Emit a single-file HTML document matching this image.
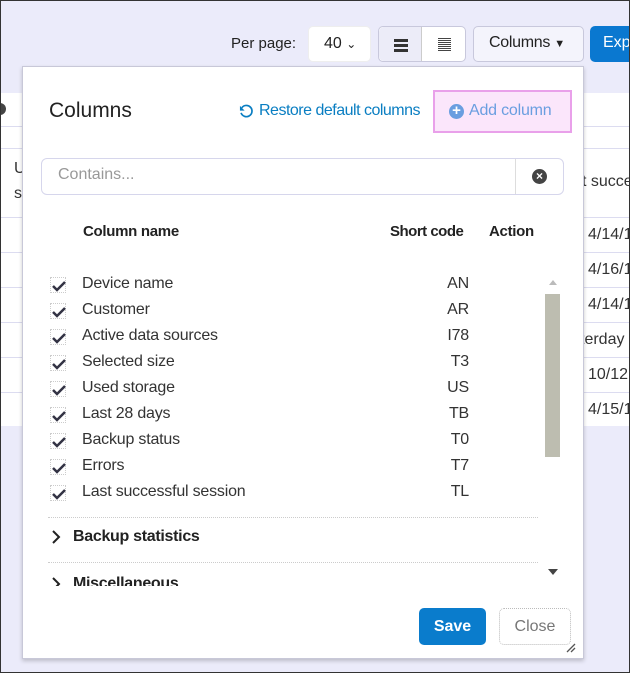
<!DOCTYPE html>
<html><head><meta charset="utf-8"><style>
*{box-sizing:border-box;margin:0;padding:0}
body{width:630px;height:673px;overflow:hidden;background:#ebebfa;font-family:"Liberation Sans",sans-serif;position:relative;}
.frame{position:absolute;left:0;top:0;width:630px;height:673px;border:1px solid #333;pointer-events:none;z-index:9}
.abs{position:absolute;white-space:nowrap}
.tbl{position:absolute;left:0;top:93px;width:630px;height:333px;background:#fff}
.hl{position:absolute;height:1px;background:#dcdcf0;left:0;width:630px}
.date{position:absolute;left:588px;font-size:16px;color:#333;white-space:nowrap}
.dlg{position:absolute;left:22px;top:66px;width:562px;height:593px;background:#fff;border:1px solid #c8c8d8;box-shadow:0 2px 4px rgba(0,0,0,.2)}
.btn{position:absolute;border:1px solid #c8c8dc;border-radius:5px;background:#fff;font-size:16px;color:#222;white-space:nowrap}
.row{position:absolute;left:0;width:520px;height:26px;font-size:16px;color:#333;letter-spacing:-0.2px}
.cb{position:absolute;left:27px;top:3px;width:16px;height:16px;border:1px dotted #ccc}
.cb svg{position:absolute;left:1px;top:2px}
.nm{position:absolute;left:59px;top:1px;white-space:nowrap}
.sc{position:absolute;left:398px;top:1px;width:48px;text-align:right}
</style></head><body>
<div class="frame"></div>
<div class="tbl">
 <div class="hl" style="top:33px"></div>
 <div class="hl" style="top:55px"></div>
 <div class="hl" style="top:124px"></div>
 <div class="hl" style="top:159px"></div>
 <div class="hl" style="top:194px"></div>
 <div class="hl" style="top:229px"></div>
 <div class="hl" style="top:264px"></div>
 <div class="hl" style="top:299px"></div>
</div>
<div class="abs" style="left:-6px;top:103px;width:12px;height:12px;border-radius:50%;background:#444"></div>
<div class="abs" style="left:14px;top:160px;font-size:16px;color:#333">U</div>
<div class="abs" style="left:14px;top:185px;font-size:16px;color:#333">s</div>
<div class="abs" style="left:582px;top:173px;font-size:16px;color:#333">t succe</div>
<div class="date" style="top:226px">4/14/1</div>
<div class="date" style="top:261px">4/16/1</div>
<div class="date" style="top:296px">4/14/1</div>
<div class="date" style="top:331px;left:580px">terday</div>
<div class="date" style="top:366px">10/12</div>
<div class="date" style="top:401px">4/15/1</div>

<div class="abs" style="left:231px;top:35px;font-size:15px;color:#222">Per page:</div>
<div class="btn" style="left:308px;top:26px;width:63px;height:36px;border-color:#eee;padding:8px 0 0 15px">40 <span style="font-size:12px">&#8964;</span></div>
<div class="btn" style="left:378px;top:26px;width:88px;height:36px;background:#fff"></div>
<div class="abs" style="left:379px;top:27px;width:43px;height:34px;background:#ececf8;border-right:1px solid #ccc;border-radius:5px 0 0 5px"></div>
<div class="abs" style="left:394px;top:39px;width:14px;height:3px;background:#333;box-shadow:0 5px 0 #333,0 10px 0 #333"></div>
<div class="abs" style="left:438px;top:38px;width:13px;height:1px;background:#444;box-shadow:0 2px 0 #444,0 4px 0 #444,0 6px 0 #444,0 8px 0 #444,0 10px 0 #444,0 12px 0 #444"></div>
<div class="btn" style="left:473px;top:26px;width:111px;height:36px;background:#f4f4fc;padding:7px 0 0 15px;letter-spacing:-0.3px">Columns <span style="font-size:11px">&#9660;</span></div>
<div class="abs" style="left:590px;top:26px;width:50px;height:36px;background:#0a78d0;border-radius:5px;color:#fff;font-size:16px;padding:8px 0 0 13px">Exp</div>

<div class="dlg">
 <div class="abs" style="left:26px;top:32px;font-size:21px;color:#222">Columns</div>
 <svg class="abs" style="left:216px;top:37px" width="15" height="15" viewBox="0 0 16 16"><path d="M3 4A6 6 0 1 1 2.2 9.5" fill="none" stroke="#0a7ec2" stroke-width="1.8"/><path d="M1 2v5h5z" fill="#0a7ec2"/></svg>
 <div class="abs" style="left:236px;top:35px;font-size:16px;color:#0a7ec2;letter-spacing:-0.5px">Restore default columns</div>
 <div class="abs" style="left:410px;top:23px;width:139px;height:43px;background:#fbe6fb;border:2px solid #e9a0ea"></div>
 <div class="abs" style="left:426px;top:37px;width:15px;height:15px;border-radius:50%;background:#6a9ee0;color:#fff;font-size:15px;line-height:14px;text-align:center;font-weight:bold">+</div>
 <div class="abs" style="left:446px;top:35px;font-size:16px;color:#6a9ee0;letter-spacing:-0.2px">Add column</div>
 <div class="abs" style="left:18px;top:91px;width:523px;height:37px;border:1px solid #d6d6ec;border-radius:6px"></div>
 <div class="abs" style="left:492px;top:92px;width:1px;height:35px;background:#ddd"></div>
 <div class="abs" style="left:35px;top:99px;font-size:16px;color:#999">Contains...</div>
 <div class="abs" style="left:509px;top:102px;width:15px;height:15px;border-radius:50%;background:#444;color:#fff;font-size:12px;line-height:15px;text-align:center;font-weight:bold">&#215;</div>
 <div class="abs" style="left:60px;top:156px;font-size:15px;font-weight:bold;color:#222;letter-spacing:-0.3px">Column name</div>
 <div class="abs" style="left:367px;top:156px;font-size:15px;font-weight:bold;color:#222;letter-spacing:-0.5px">Short code</div>
 <div class="abs" style="left:466px;top:156px;font-size:15px;font-weight:bold;color:#222;letter-spacing:-0.3px">Action</div>

 <div class="row" style="top:207px"><div class="cb"><svg width="14" height="12"><path d="M1 6l4 4 8-8" fill="none" stroke="#334" stroke-width="2.5"/></svg></div><div class="nm">Device name</div><div class="sc">AN</div></div>
 <div class="row" style="top:233px"><div class="cb"><svg width="14" height="12"><path d="M1 6l4 4 8-8" fill="none" stroke="#334" stroke-width="2.5"/></svg></div><div class="nm">Customer</div><div class="sc">AR</div></div>
 <div class="row" style="top:259px"><div class="cb"><svg width="14" height="12"><path d="M1 6l4 4 8-8" fill="none" stroke="#334" stroke-width="2.5"/></svg></div><div class="nm">Active data sources</div><div class="sc">I78</div></div>
 <div class="row" style="top:285px"><div class="cb"><svg width="14" height="12"><path d="M1 6l4 4 8-8" fill="none" stroke="#334" stroke-width="2.5"/></svg></div><div class="nm">Selected size</div><div class="sc">T3</div></div>
 <div class="row" style="top:311px"><div class="cb"><svg width="14" height="12"><path d="M1 6l4 4 8-8" fill="none" stroke="#334" stroke-width="2.5"/></svg></div><div class="nm">Used storage</div><div class="sc">US</div></div>
 <div class="row" style="top:337px"><div class="cb"><svg width="14" height="12"><path d="M1 6l4 4 8-8" fill="none" stroke="#334" stroke-width="2.5"/></svg></div><div class="nm">Last 28 days</div><div class="sc">TB</div></div>
 <div class="row" style="top:363px"><div class="cb"><svg width="14" height="12"><path d="M1 6l4 4 8-8" fill="none" stroke="#334" stroke-width="2.5"/></svg></div><div class="nm">Backup status</div><div class="sc">T0</div></div>
 <div class="row" style="top:389px"><div class="cb"><svg width="14" height="12"><path d="M1 6l4 4 8-8" fill="none" stroke="#334" stroke-width="2.5"/></svg></div><div class="nm">Errors</div><div class="sc">T7</div></div>
 <div class="row" style="top:415px"><div class="cb"><svg width="14" height="12"><path d="M1 6l4 4 8-8" fill="none" stroke="#334" stroke-width="2.5"/></svg></div><div class="nm">Last successful session</div><div class="sc">TL</div></div>

 <div class="abs" style="left:25px;top:450px;width:490px;border-top:1px dotted #ccc"></div>
 <svg class="abs" style="left:28px;top:463px" width="10" height="14"><path d="M2 1l6 6-6 6" fill="none" stroke="#222" stroke-width="2"/></svg>
 <div class="abs" style="left:50px;top:461px;font-size:16px;font-weight:bold;color:#222;letter-spacing:-0.3px">Backup statistics</div>
 <div class="abs" style="left:25px;top:495px;width:490px;border-top:1px dotted #ccc"></div>
 <div class="abs" style="left:20px;top:504px;width:300px;height:15px;overflow:hidden">
  <svg class="abs" style="left:8px;top:6px" width="10" height="14"><path d="M2 1l6 6-6 6" fill="none" stroke="#222" stroke-width="2"/></svg>
  <div class="abs" style="left:30px;top:4px;font-size:16px;font-weight:bold;color:#222;letter-spacing:-0.3px">Miscellaneous</div>
 </div>
 <div class="abs" style="left:526px;top:213px;width:0;height:0;border:4px solid transparent;border-bottom:5px solid #bbb;border-top:0"></div>
 <div class="abs" style="left:522px;top:227px;width:15px;height:163px;background:#bdbdb0"></div>
 <div class="abs" style="left:525px;top:502px;width:0;height:0;border:5px solid transparent;border-top:6px solid #444;border-bottom:0"></div>

 <div class="abs" style="left:396px;top:541px;width:67px;height:37px;background:#0a7ccc;border-radius:5px;color:#fff;font-size:16px;font-weight:bold;text-align:center;line-height:37px">Save</div>
 <div class="abs" style="left:476px;top:541px;width:72px;height:37px;border:1px dotted #bbb;border-radius:5px;color:#777;font-size:16px;text-align:center;line-height:35px">Close</div>
 <svg class="abs" style="left:543px;top:576px" width="10" height="10"><path d="M9 1L1 9M9 5L5 9" stroke="#555" stroke-width="1.3"/></svg>
</div>
</body></html>
